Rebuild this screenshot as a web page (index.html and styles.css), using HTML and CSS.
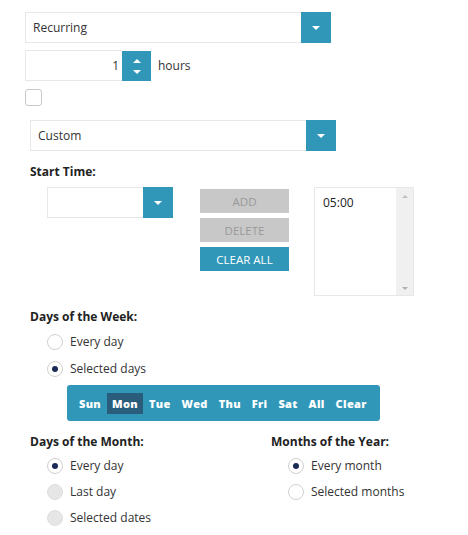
FILE: index.html
```html
<!DOCTYPE html>
<html>
<head>
<meta charset="utf-8">
<link rel="stylesheet" href="styles.css">
</head>
<body>
<div class="page">
  <div class="select wide">
    <span class="select-text">Recurring</span>
    <span class="select-btn"><span class="caret"></span></span>
  </div>

  <div class="num-row">
    <div class="num-input">1</div>
    <div class="spinner"><span class="caret up"></span><span class="caret"></span></div>
    <span class="unit">hours</span>
  </div>

  <div class="checkbox"></div>

  <div class="select wide indent">
    <span class="select-text">Custom</span>
    <span class="select-btn"><span class="caret"></span></span>
  </div>

  <div class="label indent start-label">Start Time:</div>

  <div class="start-row">
    <div class="select time">
      <span class="select-text"></span>
      <span class="select-btn"><span class="caret"></span></span>
    </div>
    <div class="btn-col">
      <div class="btn disabled">ADD</div>
      <div class="btn disabled">DELETE</div>
      <div class="btn primary">CLEAR ALL</div>
    </div>
    <div class="listbox">
      <div class="list-items">05:00</div>
      <div class="scrollbar"><span class="sarrow up"></span><span class="sarrow"></span></div>
    </div>
  </div>

  <div class="label indent week-label">Days of the Week:</div>
  <div class="radios">
    <div class="radio-row"><span class="radio"></span><span>Every day</span></div>
    <div class="radio-row"><span class="radio checked"></span><span>Selected days</span></div>
  </div>

  <div class="daybar">
    <span class="day">Sun</span>
    <span class="day active">Mon</span>
    <span class="day">Tue</span>
    <span class="day">Wed</span>
    <span class="day">Thu</span>
    <span class="day">Fri</span>
    <span class="day">Sat</span>
    <span class="day">All</span>
    <span class="day">Clear</span>
  </div>

  <div class="cols">
    <div class="col">
      <div class="label">Days of the Month:</div>
      <div class="radios">
        <div class="radio-row"><span class="radio checked"></span><span>Every day</span></div>
        <div class="radio-row"><span class="radio disabled"></span><span>Last day</span></div>
        <div class="radio-row"><span class="radio disabled"></span><span>Selected dates</span></div>
      </div>
    </div>
    <div class="col">
      <div class="label">Months of the Year:</div>
      <div class="radios">
        <div class="radio-row"><span class="radio checked"></span><span>Every month</span></div>
        <div class="radio-row"><span class="radio"></span><span>Selected months</span></div>
      </div>
    </div>
  </div>
</div>
</body>
</html>
```

FILE: styles.css
```css
* { box-sizing: border-box; }
html, body { margin: 0; padding: 0; background: #fff; }
body {
  font-family: "Open Sans", "Noto Sans", sans-serif;
  font-size: 12px;
  color: #333;
}
.page {
  padding: 12px 0 0 25px;
}
.select {
  display: flex;
  height: 31px;
  border: 1px solid #e8e8e8;
  border-right: none;
  background: #fff;
}
.select.wide { width: 306px; }
.indent { margin-left: 5px; }
.select-text {
  flex: 1;
  display: flex;
  align-items: center;
  padding-left: 7px;
}
.select-btn {
  width: 30px;
  margin: -1px 0 -1px 0;
  background: #3097b9;
  display: flex;
  align-items: center;
  justify-content: center;
}
.caret {
  width: 0; height: 0;
  border-left: 4px solid transparent;
  border-right: 4px solid transparent;
  border-top: 4px solid #fff;
}
.caret.up {
  border-top: none;
  border-bottom: 4px solid #fff;
}
.num-row {
  display: flex;
  align-items: center;
  margin-top: 7px;
  height: 31px;
}
.num-input {
  width: 97px;
  height: 31px;
  border: 1px solid #e8e8e8;
  border-right: none;
  display: flex;
  align-items: center;
  justify-content: flex-end;
  padding-right: 3px;
}
.spinner {
  width: 29px;
  height: 30px;
  background: #3097b9;
  display: flex;
  flex-direction: column;
  align-items: center;
  justify-content: center;
  gap: 7px;
  margin-top: 1px;
}
.unit { margin-left: 7px; margin-top: -1px; }
.checkbox {
  width: 17px;
  height: 17px;
  border: 1px solid #c8c8c8;
  border-radius: 3px;
  margin-top: 8px;
}
.select.wide.indent { margin-top: 14px; }
.label {
  font-weight: 700;
  font-size: 12px;
  color: #222;
  line-height: 16px;
}
.start-label { margin-top: 13px; }
.start-row {
  display: flex;
  align-items: flex-start;
  margin-top: 7px;
  padding-left: 22px;
}
.select.time { width: 126px; }
.btn-col {
  display: flex;
  flex-direction: column;
  gap: 5px;
  margin-left: 27px;
  margin-top: 2px;
}
.btn {
  width: 89px;
  height: 24px;
  display: flex;
  align-items: center;
  justify-content: center;
  font-size: 11.5px;
}
.btn.disabled { background: #c8c8c8; color: #999; }
.btn.primary { background: #3097b9; color: #fff; }
.listbox {
  display: flex;
  width: 100px;
  height: 109px;
  margin-left: 25px;
  border: 1px solid #e8e8e8;
}
.list-items {
  flex: 1;
  padding: 6px 0 0 8px;
  color: #222;
}
.scrollbar {
  width: 17px;
  background: #f0f0f0;
  display: flex;
  flex-direction: column;
  justify-content: space-between;
  align-items: center;
  padding: 7px 0 5px;
}
.sarrow {
  width: 0; height: 0;
  border-left: 3px solid transparent;
  border-right: 3px solid transparent;
  border-top: 3px solid #b0b0b0;
}
.sarrow.up { border-top: none; border-bottom: 3px solid #c0c0c0; }
.week-label { margin-top: 13px; }
.radios {
  display: flex;
  flex-direction: column;
  gap: 10px;
  margin-top: 8px;
  padding-left: 22px;
}
.radio-row {
  display: flex;
  align-items: center;
  height: 17px;
  gap: 7px;
}
.radio {
  width: 16px;
  height: 16px;
  border-radius: 50%;
  border: 1px solid #d0d0d0;
  background: #fff;
  display: flex;
  align-items: center;
  justify-content: center;
}
.radio.checked::after {
  content: "";
  width: 6px;
  height: 6px;
  border-radius: 50%;
  background: #1a2b57;
}
.radio.disabled { background: #e6e6e6; border-color: #dedede; }
.daybar {
  margin: 8px 0 0 42px;
  width: 313px;
  height: 36px;
  background: #3097b9;
  border-radius: 3px;
  display: flex;
  align-items: center;
  gap: 1px;
  padding-left: 7px;
}
.day {
  color: #fff;
  font-weight: 800;
  font-size: 11px;
  height: 21px;
  line-height: 21px;
  padding: 0 5px;
  letter-spacing: 0.3px;
}
.day.active { background: #2a5c7b; }
.cols {
  display: grid;
  grid-template-columns: 241px 1fr;
  margin: 13px 0 0 5px;
}
.cols .radios { gap: 9px; margin-top: 7px; padding-left: 17px; }
```
